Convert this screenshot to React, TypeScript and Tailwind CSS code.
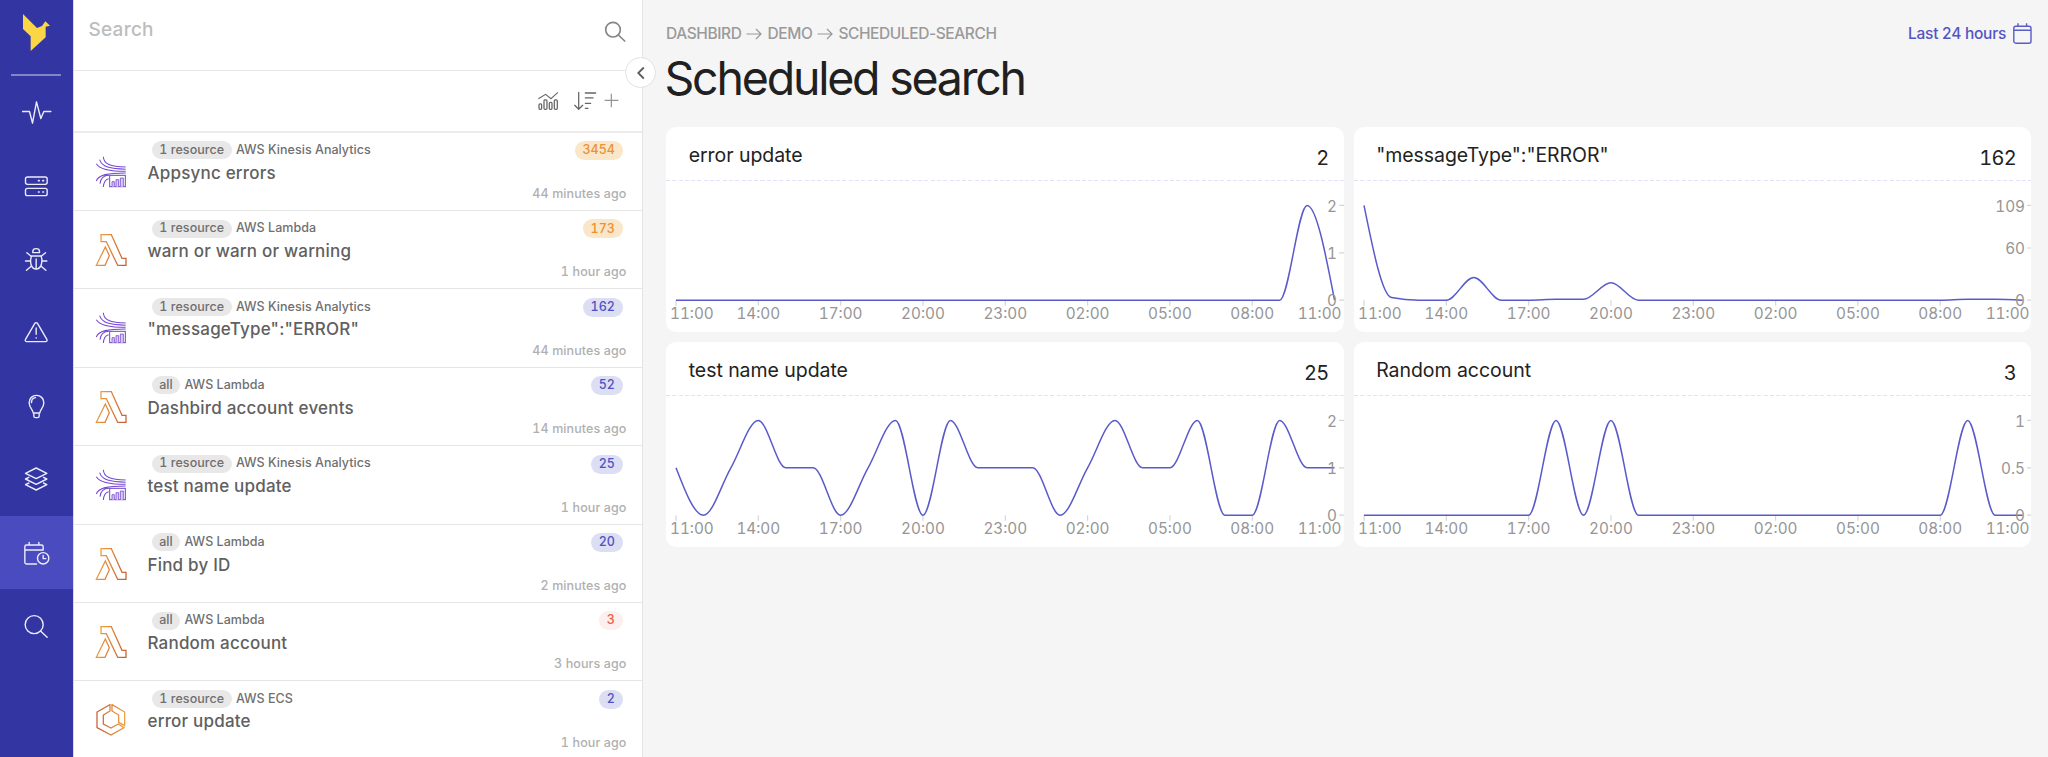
import type { ReactNode } from "react";

/* ---------- navigation rail ---------- */

const navIcons: { name: string; box: string; art: ReactNode }[] = [
  { name: "activity", box: "65.5 291.5 90 90", art: <path d="M66 335H88L97 370L109 306L122 356L131 335H152" /> },
  {
    name: "servers",
    box: "65.5 511 90 90",
    art: (
      <>
        <rect x="76" y="529" width="65" height="22" rx="6" />
        <rect x="76" y="563" width="65" height="22" rx="6" />
        <path d="M115 540h2M128 540h2M115 574h2M128 574h2" strokeWidth="5" />
      </>
    ),
  },
  {
    name: "bug",
    box: "65.5 731 90 90",
    art: (
      <>
        <path d="M94 767H123C126 775 126 784 124 791C121 801 115 806 108 806C101 806 95 801 92 791C90 784 91 775 94 767Z" />
        <path d="M98 757V753C98 748 102 745 108 745C114 745 118 748 118 753V757Z" />
        <path d="M108 776V805M76 782H90M126 782H140M80 757L92 767M136 757L124 767M79 810L93 798M137 810L123 798" />
      </>
    ),
  },
  {
    name: "alerts",
    box: "65.5 951 90 90",
    art: (
      <>
        <path d="M104 970C106 967 110 967 112 970L140 1018C142 1022 140 1025 136 1025H80C76 1025 74 1022 76 1018Z" />
        <path d="M108 984V1003M108 1013V1014" />
      </>
    ),
  },
  {
    name: "insights",
    box: "65.5 40 90 90",
    art: (
      <>
        <path d="M99 106C99 97 87 90 87 75C87 62 97 53 109 53C121 53 131 62 131 75C131 90 119 97 119 106Z" />
        <path d="M101 108V115C101 118 103 120 106 120H112C115 120 117 118 117 115V108" />
        <path d="M94 75C94 67 99 61 106 60" />
      </>
    ),
  },
  {
    name: "layers",
    box: "65.5 260 90 90",
    art: <path d="M108 272L140 288L108 304L76 288ZM86 300L76 305L108 321L140 305L130 300M86 317L76 322L108 338L140 322L130 317" />,
  },
  {
    name: "scheduled",
    box: "65.5 480 90 90",
    art: (
      <>
        <path d="M109 558H79C76 558 74 556 74 553V506C74 503 76 501 79 501H124C127 501 129 503 129 506V516H75M87 493V501M116 493V501" />
        <circle cx="129" cy="541" r="17" />
        <path d="M129 532V542H137" />
      </>
    ),
  },
  {
    name: "search",
    box: "65.5 699 90 90",
    art: (
      <>
        <circle cx="102" cy="740" r="27" />
        <path d="M121 759L141 778" />
      </>
    ),
  },
];

function Rail() {
  return (
    <nav className="flex w-[73px] shrink-0 flex-col bg-[#3335a3]">
      <div className="flex h-[75.5px] shrink-0 flex-col items-center justify-end">
        <svg className="h-[41px] w-[30px]" viewBox="63 36 90 123" fill="#fbd545">
          <path d="M66 42L108 84L123 78L133 64L147 77L134 80V112L89 153V109L66 87Z" />
        </svg>
        <div className="mt-[21.5px] mr-[1px] h-[1.5px] w-[50px] bg-[#8485c8]" />
      </div>
      {navIcons.map((n) => (
        <div
          key={n.name}
          className={
            n.name === "scheduled"
              ? "flex h-[73.4px] shrink-0 items-center justify-center bg-[#4a4bbf]"
              : "flex h-[73.4px] shrink-0 items-center justify-center"
          }
        >
          <svg
            className="h-[30px] w-[30px] text-[#ececf8]"
            viewBox={n.box}
            fill="none"
            stroke="currentColor"
            strokeWidth="4.2"
            strokeLinejoin="round"
            strokeLinecap="round"
          >
            {n.art}
          </svg>
        </div>
      ))}
    </nav>
  );
}

/* ---------- search list ---------- */

type Service = "kinesis" | "lambda" | "ecs";
type Tone = "orange" | "indigo" | "red";

const serviceNames: Record<Service, string> = {
  kinesis: "AWS Kinesis Analytics",
  lambda: "AWS Lambda",
  ecs: "AWS ECS",
};

const toneClasses: Record<Tone, string> = {
  orange: "bg-[#fae6c8] text-[#ea9135]",
  indigo: "bg-[#dcdef4] text-[#5052c4]",
  red: "bg-[#fcefed] text-[#ea5f45]",
};

const searches: { scope: string; service: Service; name: string; count: string; tone: Tone; ago: string }[] = [
  { scope: "1 resource", service: "kinesis", name: "Appsync errors", count: "3454", tone: "orange", ago: "44 minutes ago" },
  { scope: "1 resource", service: "lambda", name: "warn or warn or warning", count: "173", tone: "orange", ago: "1 hour ago" },
  { scope: "1 resource", service: "kinesis", name: '"messageType":"ERROR"', count: "162", tone: "indigo", ago: "44 minutes ago" },
  { scope: "all", service: "lambda", name: "Dashbird account events", count: "52", tone: "indigo", ago: "14 minutes ago" },
  { scope: "1 resource", service: "kinesis", name: "test name update", count: "25", tone: "indigo", ago: "1 hour ago" },
  { scope: "all", service: "lambda", name: "Find by ID", count: "20", tone: "indigo", ago: "2 minutes ago" },
  { scope: "all", service: "lambda", name: "Random account", count: "3", tone: "red", ago: "3 hours ago" },
  { scope: "1 resource", service: "ecs", name: "error update", count: "2", tone: "indigo", ago: "1 hour ago" },
];

function ServiceIcon({ service }: { service: Service }) {
  if (service === "kinesis") {
    return (
      <svg className="h-8 w-8" viewBox="286 466 96 96" fill="none" stroke="#7448d2" strokeWidth="3.1">
        <path d="M311 468C312 490 332 498 378 499M300 477C306 499 332 505 378 505.5M290 489C300 507 335 512 378 512" />
        <path d="M290 541C296 522 325 517 378 517M301 549C303 533 312 524 328 524M311 559C312 545 318 536 327 534" />
        <rect x="330" y="524" width="47" height="34" />
        <path d="M337 558V543H344V558M349 558V537H357V558M362 558V532H371V558" fill="#d9ccf4" strokeWidth="2.4" />
      </svg>
    );
  }
  if (service === "lambda") {
    return (
      <svg className="h-8 w-8" viewBox="286 466 96 96" fill="none" stroke="url(#lambda-stroke)" strokeWidth="3.8">
        <defs>
          <linearGradient id="lambda-stroke" gradientUnits="userSpaceOnUse" x1="290" y1="540" x2="379" y2="560">
            <stop offset="0" stopColor="#ec9a40" />
            <stop offset="1" stopColor="#c66034" />
          </linearGradient>
        </defs>
        <path d="M304 468H335L367 539H379V560H354L320 489H304ZM317 505L329 531L316 560H290Z" />
      </svg>
    );
  }
  return (
    <svg className="h-8 w-8" viewBox="286 466 96 96" fill="none" stroke="url(#ecs-stroke)" strokeWidth="3.8">
      <defs>
        <linearGradient id="ecs-stroke" gradientUnits="userSpaceOnUse" x1="292" y1="513" x2="376" y2="513">
          <stop offset="0" stopColor="#c66034" />
          <stop offset="1" stopColor="#f0a040" />
        </linearGradient>
      </defs>
      <path d="M331 468L292 490V537L334 559L373 537L356 526L334 538L311 526V499L331 487ZM337 468L375 490V531L357 521V499L337 487Z" />
    </svg>
  );
}

function SearchList() {
  return (
    <aside className="flex w-[570px] shrink-0 flex-col overflow-hidden border-x border-l-[#d9d9ef] border-r-[#e4e4e4] bg-white">
      <div className="flex h-[70.5px] shrink-0 justify-between border-b-[1.5px] border-[#e8e8e8] pr-[16px] pl-[14.5px]">
        <span className="mt-[18px] text-[19px] leading-6 font-medium tracking-[0.25px] text-[#bdbdbd]">Search</span>
        <svg
          className="mt-[21px] h-[22px] w-[22px]"
          viewBox="702 64 66 66"
          fill="none"
          stroke="#858585"
          strokeWidth="5"
          strokeLinecap="round"
        >
          <circle cx="729" cy="90" r="22" />
          <path d="M745 106L764 124" />
        </svg>
      </div>

      <div className="flex h-[62.2px] shrink-0 items-center justify-end border-b-2 border-[#ebebeb] pr-[23.5px]">
        <svg className="h-[19.3px] w-[20.3px]" viewBox="55 94 61 58" fill="none" stroke="#666666" strokeWidth="3.8">
          <path d="M56 117L78 104L94 117L115 98" strokeWidth="3.4" />
          <rect x="58" y="133" width="8" height="16" rx="3" />
          <rect x="73" y="121" width="9" height="28" rx="3" />
          <rect x="89" y="128" width="8" height="21" rx="3" />
          <rect x="104" y="121" width="9" height="28" rx="3" />
        </svg>
        <svg
          className="ml-[15.4px] h-[19.3px] w-[22.7px]"
          viewBox="162 94 68 58"
          fill="none"
          stroke="#666666"
          strokeWidth="3.8"
          strokeLinecap="round"
        >
          <path d="M176 98V148M164 137L176 149L188 137M196 100H227M196 115H219M196 131H212M196 146H204" />
        </svg>
        <svg className="ml-[7.3px] h-[14.7px] w-[14.7px]" viewBox="252 101 44 44" stroke="#949494" strokeWidth="3.6">
          <path d="M254 123H295M274 103V144" />
        </svg>
      </div>

      {searches.map((s) => (
        <div key={s.name} className="flex h-[78.4px] shrink-0 border-b-[1.5px] border-[#e6e6e6] pr-[15.5px] pl-[21.3px]">
          <span className="mt-[22.9px] w-[52.2px] shrink-0">
            <ServiceIcon service={s.service} />
          </span>
          <div className="flex min-w-0 grow flex-col pt-[8.6px]">
            <div className="flex h-[18px] items-center gap-[4.2px] pl-[4.2px] text-[12.5px] font-medium text-[#6f6f6f]">
              <span className="flex h-[18px] items-center rounded-full bg-[#e8e8e8] px-[7.5px] tracking-[0.07px] tabular-nums">
                {s.scope}
              </span>
              <span className="tracking-[0.03px]">{serviceNames[s.service]}</span>
            </div>
            <span className="mt-[1.4px] text-[17px] leading-6 font-medium tracking-[0.2px] text-[#606060]">{s.name}</span>
          </div>
          <div className="flex shrink-0 flex-col items-end pt-[8.3px]">
            <span
              className={`mr-[4px] flex h-[19px] items-center rounded-full px-[7.6px] text-[12.5px] font-medium tabular-nums ${toneClasses[s.tone]}`}
            >
              {s.count}
            </span>
            <span className="mt-[26px] text-[12.5px] leading-4 font-medium tracking-[0.1px] text-[#b0b0b0] tabular-nums">
              {s.ago}
            </span>
          </div>
        </div>
      ))}
    </aside>
  );
}

/* ---------- charts ---------- */

type Chart = { title: string; total: string; values: number[]; max: number; ticks: [number, string][] };

const charts: Chart[] = [
  {
    title: "error update",
    total: "2",
    max: 2,
    ticks: [[2, "2"], [1, "1"], [0, "0"]],
    values: [0, 0, 0, 0, 0, 0, 0, 0, 0, 0, 0, 0, 0, 0, 0, 0, 0, 0, 0, 0, 0, 0, 0, 2, 0],
  },
  {
    title: '"messageType":"ERROR"',
    total: "162",
    max: 109,
    ticks: [[109, "109"], [60, "60"], [0, "0"]],
    values: [109, 3, 0, 0, 26, 0, 0, 1, 1, 20, 0, 0, 0, 0, 0, 0, 0, 0, 0, 0, 0, 0, 1, 1, 0],
  },
  {
    title: "test name update",
    total: "25",
    max: 2,
    ticks: [[2, "2"], [1, "1"], [0, "0"]],
    values: [1, 0, 1, 2, 1, 1, 0, 1, 2, 0, 2, 1, 1, 1, 0, 1, 2, 1, 1, 2, 0, 0, 2, 1, 1],
  },
  {
    title: "Random account",
    total: "3",
    max: 1,
    ticks: [[1, "1"], [0.5, "0.5"], [0, "0"]],
    values: [0, 0, 0, 0, 0, 0, 0, 1, 0, 1, 0, 0, 0, 0, 0, 0, 0, 0, 0, 0, 0, 0, 1, 0, 0],
  },
];

const hours = ["11:00", "14:00", "17:00", "20:00", "23:00", "02:00", "05:00", "08:00", "11:00"];

const LEFT = 10;
const STEP = 27.44;
const BASE = 119.2;
const HEIGHT = 94.8;

/** Monotone cubic path through evenly spaced samples. */
function curve(values: number[], max: number): string {
  const ys = values.map((v) => BASE - (v / max) * HEIGHT);
  const last = ys.length - 1;
  const slope = ys.slice(1).map((y, i) => (y - ys[i]) / STEP);
  const tangent = ys.map((_, i) => {
    if (i === 0 || i === last) return 0;
    const a = slope[i - 1];
    const b = slope[i];
    return (Math.sign(a) + Math.sign(b)) * Math.min(Math.abs(a), Math.abs(b), 0.25 * Math.abs(a + b)) || 0;
  });
  tangent[0] = (3 * slope[0] - tangent[1]) / 2;
  tangent[last] = (3 * slope[last - 1] - tangent[last - 1]) / 2;
  let d = `M${LEFT} ${ys[0]}`;
  for (let i = 0; i < last; i++) {
    const x0 = LEFT + i * STEP;
    const x1 = x0 + STEP;
    const k = STEP / 3;
    d += `C${x0 + k} ${ys[i] + k * tangent[i]} ${x1 - k} ${ys[i + 1] - k * tangent[i + 1]} ${x1} ${ys[i + 1]}`;
  }
  return d;
}

function ChartCard({ chart }: { chart: Chart }) {
  return (
    <section className="flex h-[205.2px] flex-col overflow-hidden rounded-[10px] bg-white">
      <header className="flex h-[53.2px] shrink-0 justify-between pr-[15px] pl-[22.7px] text-[#222222]">
        <h2 className="mt-[16.3px] text-[19.5px] leading-6 font-normal tracking-[-0.05px]">{chart.title}</h2>
        <span className="mt-[19.2px] text-[20px] leading-6 font-normal tracking-[-0.7px] tabular-nums">{chart.total}</span>
      </header>
      <div className="h-[1.5px] shrink-0 bg-[repeating-linear-gradient(90deg,#e2e1f9_0_4px,transparent_4px_6.3px)]" />
      <svg className="h-[150px] w-full" viewBox="0 0 677.5 150" preserveAspectRatio="none">
        <g stroke="#d6d6d6" strokeWidth="1.2">
          {hours.slice(0, 8).map((h, i) => (
            <path key={h} d={`M${LEFT + i * 3 * STEP} ${BASE}v5.5`} />
          ))}
          {chart.ticks.map(([v, label]) => (
            <path key={label} d={`M673 ${BASE - (v / chart.max) * HEIGHT}h5`} />
          ))}
        </g>
        <path d={curve(chart.values, chart.max)} fill="none" stroke="#5a5bca" strokeWidth="1.5" />
        <g fill="#969696" className="text-[15.3px] tabular-nums">
          {hours.map((h, i) => (
            <text
              key={i}
              x={i === 0 ? 4 : i === 8 ? 675.5 : LEFT + i * 3 * STEP}
              y="137.8"
              textAnchor={i === 0 ? "start" : i === 8 ? "end" : "middle"}
            >
              {h}
            </text>
          ))}
          {chart.ticks.map(([v, label]) => (
            <text key={label} x="671" y={BASE - (v / chart.max) * HEIGHT + 6.2} textAnchor="end">
              {label}
            </text>
          ))}
        </g>
      </svg>
    </section>
  );
}

function Arrow() {
  return (
    <svg className="mx-[5px] h-[12px] w-[16px]" viewBox="0 0 16 12" fill="none" stroke="#999999" strokeWidth="1.2">
      <path d="M0.5 6H15M10 1L15 6L10 11" />
    </svg>
  );
}

export default function App() {
  return (
    <div className="flex h-[757px] w-[2048px] overflow-hidden bg-[#f5f5f5] font-['Inter','Liberation_Sans',sans-serif]">
      <Rail />
      <div className="relative flex shrink-0">
        <SearchList />
        <button className="absolute top-[57px] right-[-13px] flex h-[31px] w-[31px] items-center justify-center rounded-full border border-[#e2e2e2] bg-white">
          <svg className="h-[14px] w-[8px]" viewBox="0 0 8 14" fill="none" stroke="#5c5c5c" strokeWidth="1.8">
            <path d="M6.8 1.5L1.3 7L6.8 12.5" />
          </svg>
        </button>
      </div>
      <main className="flex grow flex-col pr-[17px] pl-[23px]">
        <div className="mt-[23.6px] flex h-[20px] items-center justify-between text-[15.5px]">
          <div className="flex items-center font-medium tracking-[-0.41px] text-[#9a9a9a]">
            <span>DASHBIRD</span>
            <Arrow />
            <span>DEMO</span>
            <Arrow />
            <span>SCHEDULED-SEARCH</span>
          </div>
          <div className="-mr-[1px] flex items-center gap-[7px] font-medium tracking-[-0.26px] text-[#5354c6]">
            <span>Last 24 hours</span>
            <svg className="h-[21px] w-[19px]" viewBox="0 0 19 21" fill="none" stroke="#5a5cc8" strokeWidth="1.4">
              <rect x="0.8" y="3.2" width="17.2" height="17" rx="2" />
              <path d="M0.8 7.2H18M5 0.2V3.2M13.6 0.2V3.2" />
            </svg>
          </div>
        </div>
        <h1 className="mt-[6.6px] -ml-[1.5px] h-[56px] text-[46.5px] leading-[56px] font-normal tracking-[-2.22px] text-[#202020]">
          Scheduled search
        </h1>
        <div className="mt-[20.4px] grid grid-cols-2 gap-[10px]">
          {charts.map((c) => (
            <ChartCard key={c.title} chart={c} />
          ))}
        </div>
      </main>
    </div>
  );
}
